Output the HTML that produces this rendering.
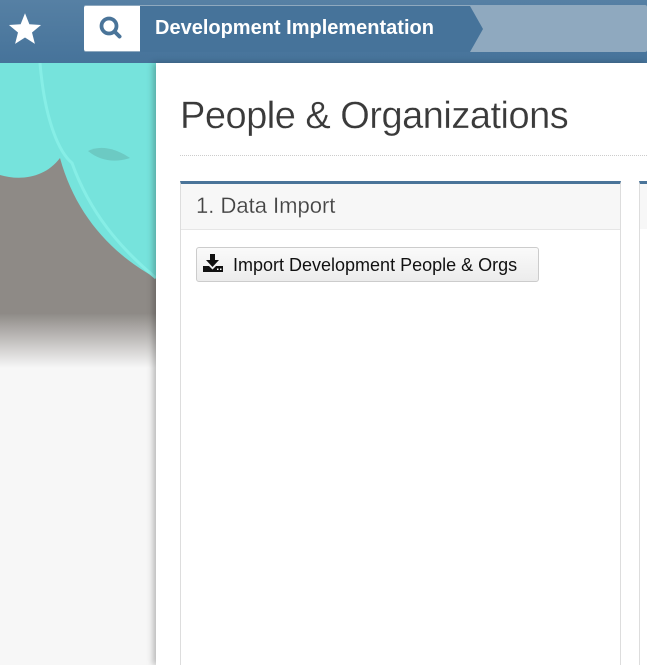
<!DOCTYPE html>
<html><head><style>
html,body{margin:0;width:647px;height:665px;overflow:hidden}
body{position:relative;font-family:"Liberation Sans",sans-serif;background:#fff}
.hdr{position:absolute;left:0;top:0;width:647px;height:63px;background:linear-gradient(#5680a4,#46739a);}
.side{position:absolute;left:0;top:63px;width:156px;height:602px;background:#f7f7f7}
.main{position:absolute;left:156px;top:63px;width:491px;height:602px;background:#fff;box-shadow:-3px 0 6px rgba(0,0,0,.25)}
</style></head><body>
<div class="hdr"></div>
<svg style="position:absolute;left:7px;top:11px" width="36" height="35" viewBox="0 0 24 24"><path fill="#fff" d="M12 1.5l3 7.6 8 .5-6.2 5.1 2 7.8L12 18.2 5.2 22.5l2-7.8L1 9.6l8-.5z"/></svg>
<div style="position:absolute;left:84px;top:5px;width:563px;height:47px;background:#8fa9bf;border-radius:2px"></div>
<div style="position:absolute;left:84px;top:6px;width:56px;height:45px;background:#fff;border-radius:2px 0 0 2px"></div>
<svg style="position:absolute;left:97px;top:14px" width="30" height="28" viewBox="0 0 30 28"><circle cx="12" cy="12" r="7.5" fill="none" stroke="#4a7499" stroke-width="3.8"/><path d="M17.5 17.5l5 5" stroke="#4a7499" stroke-width="4" stroke-linecap="round"/></svg>
<svg style="position:absolute;left:140px;top:6px" width="345" height="46"><polygon points="0,0 330,0 343,23 330,46 0,46" fill="#46739a"/></svg>
<div style="position:absolute;left:155px;top:15px;color:#fff;font-weight:bold;font-size:20px;line-height:26px">Development Implementation</div>
<div class="side">
<svg width="156" height="305" style="position:absolute;left:0;top:0">
<defs><linearGradient id="f" x1="0" y1="0" x2="0" y2="1"><stop offset="0.82" stop-color="#f7f7f7" stop-opacity="0"/><stop offset="1" stop-color="#f7f7f7"/></linearGradient></defs>
<rect width="156" height="305" fill="#8e8a86"/>
<path d="M0 0H156V215C110 190 75 150 60 95C45 115 20 118 0 112Z" fill="#76e3dc"/>
<path d="M40 0C45 60 60 90 72 100C90 150 120 185 156 215" fill="none" stroke="#86eee6" stroke-width="3"/>
<path d="M88 88C100 82 115 85 130 95C115 100 100 98 88 88Z" fill="#6ccac3"/>
<rect width="156" height="305" fill="url(#f)"/>
</svg></div>
<div class="main"></div>
<div style="position:absolute;left:180px;top:93px;font-size:38px;color:#3a3a3a;line-height:46px;letter-spacing:-.5px;-webkit-text-stroke:0.3px #fff">People &amp; Organizations</div>
<div style="position:absolute;left:180px;top:155px;width:467px;border-top:1px dotted #ccc"></div>
<div style="position:absolute;left:180px;top:181px;width:439px;height:490px;border:1px solid #ddd;border-top:3px solid #4a7499;background:#fff"></div>
<div style="position:absolute;left:181px;top:184px;width:439px;height:45px;background:#f7f7f7;border-bottom:1px solid #e6e6e6"></div>
<div style="position:absolute;left:196px;top:192px;font-size:22px;color:#444;line-height:28px;-webkit-text-stroke:0.2px #f7f7f7">1. Data Import</div>
<div style="position:absolute;left:639px;top:181px;width:20px;height:490px;border:1px solid #ddd;border-top:3px solid #4a7499"></div>
<div style="position:absolute;left:640px;top:184px;width:10px;height:45px;background:#f7f7f7"></div>
<div style="position:absolute;left:196px;top:247px;width:341px;height:33px;border:1px solid #ccc;border-radius:3px;background:linear-gradient(#fafafa,#ececec)"></div>
<svg style="position:absolute;left:203px;top:254px" width="20" height="18" viewBox="0 0 20 18"><path d="M7 0h5v6h4l-6.5 7L3 6h4z" fill="#111"/><path d="M0 12h6l3.5 3.5L13 12h7v6H0z" fill="#111"/><rect x="14" y="14.5" width="1.5" height="1.5" fill="#fff"/><rect x="17" y="14.5" width="1.5" height="1.5" fill="#fff"/></svg>
<div style="position:absolute;left:233px;top:253px;font-size:18px;color:#111;line-height:24px">Import Development People &amp; Orgs</div>
</body></html>
